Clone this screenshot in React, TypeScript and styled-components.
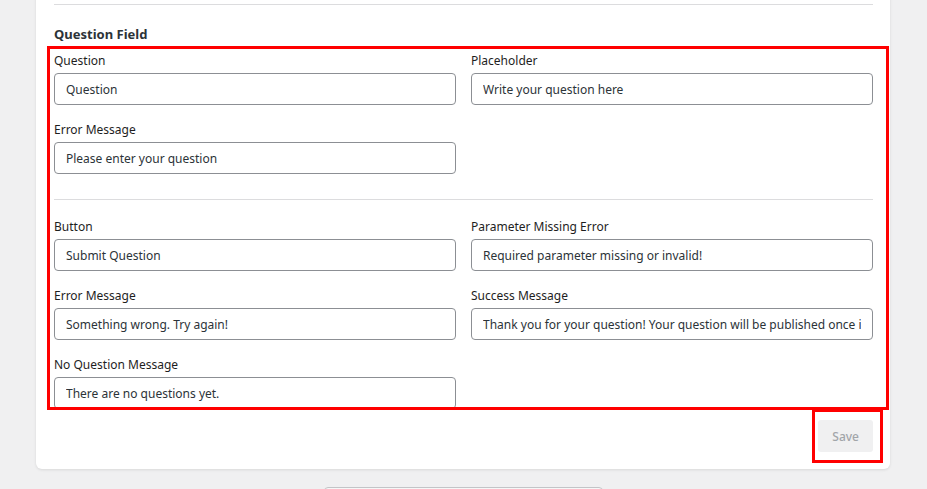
import styled, { createGlobalStyle } from 'styled-components';

const GlobalStyle = createGlobalStyle`
  html, body {
    margin: 0;
    padding: 0;
    background: #f0f0f1;
    font-family: 'Noto Sans', 'Liberation Sans', sans-serif;
    color: #2c3338;
    overflow: hidden;
  }
`;

interface Field {
  label: string;
  value: string;
}

const generalFields: (Field | null)[] = [
  { label: 'Question', value: 'Question' },
  { label: 'Placeholder', value: 'Write your question here' },
  { label: 'Error Message', value: 'Please enter your question' },
  null,
];

const messageFields: (Field | null)[] = [
  { label: 'Button', value: 'Submit Question' },
  { label: 'Parameter Missing Error', value: 'Required parameter missing or invalid!' },
  { label: 'Error Message', value: 'Something wrong. Try again!' },
  { label: 'Success Message', value: 'Thank you for your question! Your question will be published once it is approved.' },
  { label: 'No Question Message', value: 'There are no questions yet.' },
  null,
];

const renderGrid = (fields: (Field | null)[]) =>
  fields.map((field, i) =>
    field ? (
      <FieldBox key={i}>
        <Label>{field.label}</Label>
        <Input type='text' defaultValue={field.value} />
      </FieldBox>
    ) : (
      <div key={i} />
    )
  );

const App = () => {
  return (
    <>
      <GlobalStyle />
      <Page>
        <Card>
          <TopRule />
          <SectionTitle>Question Field</SectionTitle>
          <Highlight>
            <Grid $bottom={25}>{renderGrid(generalFields)}</Grid>
            <Divider />
            <Grid $top={18}>{renderGrid(messageFields)}</Grid>
          </Highlight>
          <Footer>
            <SaveButton disabled>Save</SaveButton>
          </Footer>
        </Card>
        <NextBlock />
      </Page>
    </>
  );
};

const Page = styled.div`
  padding: 0 37px 0 36px;
`;

const Card = styled.div`
  margin-top: -20px;
  background: #ffffff;
  border-radius: 6px;
  box-shadow: 0 1px 3px rgba(0, 0, 0, 0.1);
  padding: 0 17px 17px 18px;
`;

const TopRule = styled.div`
  height: 24px;
  border-bottom: 1px solid #dcdcde;
`;

const SectionTitle = styled.h3`
  margin: 0;
  padding-top: 20px;
  font-size: 13px;
  line-height: 18px;
  font-weight: 700;
  color: #2c3338;
  margin-bottom: 9px;
`;

const Highlight = styled.div`
  position: relative;

  &::after {
    content: '';
    position: absolute;
    top: -6px;
    left: -7px;
    right: -16px;
    bottom: -1px;
    border: 3px solid #ff0000;
    pointer-events: none;
  }
`;

const Grid = styled.div<{ $top?: number; $bottom?: number }>`
  display: grid;
  grid-template-columns: 1fr 1fr;
  column-gap: 15px;
  row-gap: 16px;
  padding-top: ${(p) => p.$top ?? 0}px;
  padding-bottom: ${(p) => p.$bottom ?? 0}px;
`;

const FieldBox = styled.div`
  display: flex;
  flex-direction: column;
  gap: 3px;
  min-width: 0;
`;

const Label = styled.label`
  font-size: 12px;
  line-height: 18px;
  color: #1e1e1e;
`;

const Input = styled.input`
  box-sizing: border-box;
  width: 100%;
  height: 32px;
  padding: 0 11px;
  border: 1px solid #8c8f94;
  border-radius: 4px;
  background: #fff;
  font-family: inherit;
  font-size: 12px;
  color: #2c3338;
  outline: none;
`;

const Divider = styled.hr`
  margin: 0;
  border: none;
  border-top: 1px solid #dcdcde;
`;

const Footer = styled.div`
  display: flex;
  justify-content: flex-end;
  padding-top: 11px;
`;

const SaveButton = styled.button`
  position: relative;
  height: 32px;
  padding: 0 14px;
  border: none;
  border-radius: 3px;
  background: #f0f0f1;
  color: #a2a5a9;
  font-family: inherit;
  font-size: 12px;
  font-weight: 500;

  &::after {
    content: '';
    position: absolute;
    top: -11px;
    left: -6px;
    right: -10px;
    bottom: -11px;
    border: 3px solid #ff0000;
  }
`;

const NextBlock = styled.div`
  width: 277px;
  height: 30px;
  margin: 18px auto 0;
  border: 1px solid #c3c4c7;
  border-radius: 4px;
  background: #f6f7f7;
`;

export default App;
